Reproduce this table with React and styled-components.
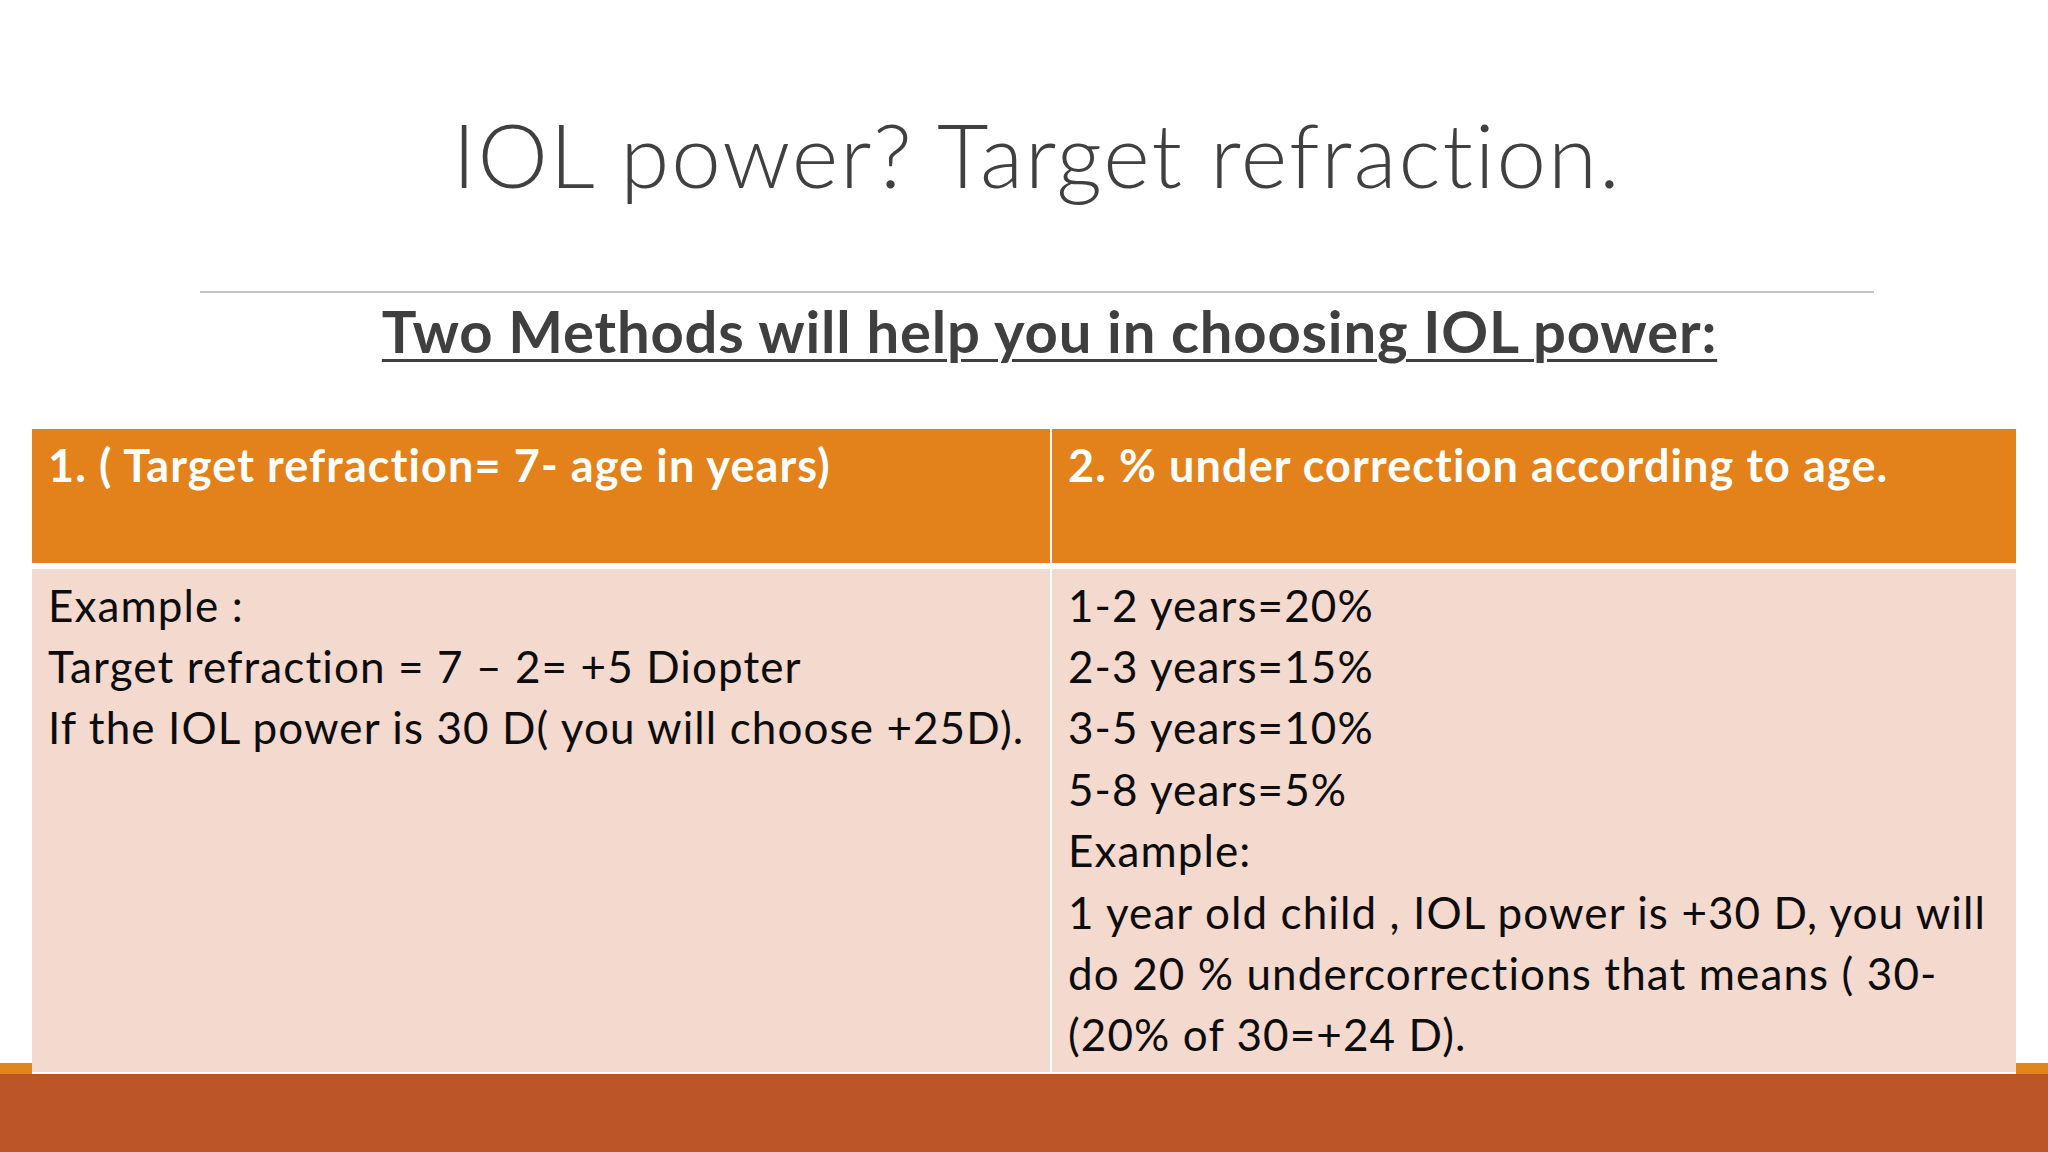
import React from "react";
import styled, { createGlobalStyle } from "styled-components";

const Global = createGlobalStyle`
  html, body { margin: 0; padding: 0; background: #ffffff; }
  body { width: 2048px; height: 1152px; overflow: hidden; font-family: Lato, "Open Sans", sans-serif; }
`;

const Slide = styled.div`
  width: 2048px;
  height: 1152px;
  display: flex;
  flex-direction: column;
  background: #ffffff;
`;

const Heading = styled.div`
  margin-left: 200px;
  width: 1674px;
  display: flex;
  flex-direction: column;
  align-items: center;
`;

const Title = styled.h1`
  margin: 0;
  padding-top: 101px;
  height: 291px;
  box-sizing: border-box;
  font-family: Lato, sans-serif;
  font-weight: 300;
  font-size: 89px;
  line-height: 1.2;
  letter-spacing: 1.9px;
  color: #404040;
  white-space: nowrap;
`;

const Rule = styled.hr`
  margin: 0;
  width: 100%;
  border: none;
  height: 2px;
  background: #c4c4c4;
`;

const Subtitle = styled.h2`
  margin: 0;
  padding: 3px 0 0 25px;
  font-family: Lato, sans-serif;
  font-weight: 700;
  font-size: 58px;
  line-height: 1.2;
  letter-spacing: 0.8px;
  color: #3f3f3f;
  text-decoration: underline;
  text-decoration-thickness: 3px;
  text-underline-offset: 6px;
  white-space: nowrap;
`;

const Table = styled.div`
  margin: 63px 0 -11px 32px;
  width: 1984px;
  display: grid;
  grid-template-columns: 1018px 964px;
  grid-template-rows: 134px 503px;
  column-gap: 2px;
  row-gap: 6px;
  padding-bottom: 2px;
  background: #ffffff;
  position: relative;
  z-index: 1;
`;

const Cell = styled.div`
  box-sizing: border-box;
  padding: 6px 15px 0 16px;
  background: ${p => (p.$head ? "#e3821a" : "#f4d9ce")};
  color: ${p => (p.$head ? "#ffffff" : "#0d0d0d")};
  font-family: Lato, sans-serif;
  font-weight: ${p => (p.$head ? 700 : 400)};
  font-size: ${p => (p.$head ? "45px" : "44px")};
  letter-spacing: 1.1px;
  line-height: 61.4px;
  white-space: nowrap;
`;

const Line = styled.div``;

const Footer = styled.div`
  margin-top: auto;
  display: flex;
  flex-direction: column;
`;

const Stripe = styled.div`
  height: 11px;
  background: #e3861a;
`;

const Bar = styled.div`
  height: 78px;
  background: #bc5628;
`;

export default function App() {
  const left = [
    "Example :",
    "Target refraction = 7 \u2013 2= +5 Diopter",
    "If the IOL power is 30 D( you will choose +25D).",
  ];
  const right = [
    "1-2 years=20%",
    "2-3 years=15%",
    "3-5 years=10%",
    "5-8 years=5%",
    "Example:",
    "1 year old child , IOL power is +30 D, you will",
    "do 20 % undercorrections that means ( 30-",
    "(20% of 30=+24 D).",
  ];
  return (
    <>
      <Global />
      <Slide>
        <Heading>
          <Title>IOL power? Target refraction.</Title>
          <Rule />
          <Subtitle>Two Methods will help you in choosing IOL power:</Subtitle>
        </Heading>
        <Table>
          <Cell $head>1. ( Target refraction= 7- age in years)</Cell>
          <Cell $head>2. % under correction according to age.</Cell>
          <Cell>
            {left.map((t, i) => (
              <Line key={i}>{t}</Line>
            ))}
          </Cell>
          <Cell>
            {right.map((t, i) => (
              <Line key={i}>{t}</Line>
            ))}
          </Cell>
        </Table>
        <Footer>
          <Stripe />
          <Bar />
        </Footer>
      </Slide>
    </>
  );
}
